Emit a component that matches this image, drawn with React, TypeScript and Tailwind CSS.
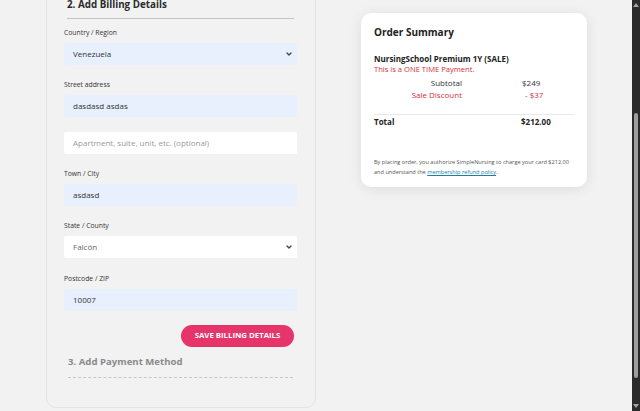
import { ChevronDown } from "lucide-react";

function Field({
  label,
  value,
  placeholder,
  filled,
  select,
  muted,
  className = "",
}: {
  label?: string;
  value?: string;
  placeholder?: string;
  filled?: boolean;
  select?: boolean;
  muted?: boolean;
  className?: string;
}) {
  return (
    <div className={className}>
      {label && <div className="h-[12px] text-[6.8px] leading-[12px] text-[#333]">{label}</div>}
      <div
        className={`${label ? "mt-[4px]" : ""} flex h-[22px] items-center justify-between rounded-[2px] px-[9px] text-[8px] ${
          filled ? "bg-[#e8f0fe]" : "bg-white"
        }`}
      >
        {value ? (
          <span className={muted ? "text-[#666]" : "text-[#333]"}>{value}</span>
        ) : (
          <span className="text-[#9a9a9a]">{placeholder}</span>
        )}
        {select && <ChevronDown size={8} strokeWidth={4} className="text-[#444] -mr-[5px]" />}
      </div>
    </div>
  );
}

export default function App() {
  return (
    <div className="flex h-[411px] w-[640px] overflow-hidden bg-[#f2f2f2] font-['Open_Sans',sans-serif]">
      <div className="flex flex-1 items-start">
        {/* billing form */}
        <div className="ml-[46px] mt-[-20px] w-[270px] rounded-b-[10px] border border-[#e3e3e3] bg-[#f2f2f2] pb-[29px] pl-[17px] pr-[18px] pt-[17px]">
          <div className="px-[3px]">
            <h2 className="text-[9.8px] font-bold leading-[13px] text-[#2b2b2b]">2. Add Billing Details</h2>
            <div className="mt-[7px] border-t border-[#c4c4c4]" />
          </div>

          <Field className="mt-[8px]" label="Country / Region" value="Venezuela" filled select />
          <Field className="mt-[14px]" label="Street address" value="dasdasd asdas" filled />
          <Field className="mt-[15px]" placeholder="Apartment, suite, unit, etc. (optional)" />
          <Field className="mt-[14px]" label="Town / City" value="asdasd" filled />
          <Field className="mt-[14px]" label="State / County" value="Falcón" select muted />
          <Field className="mt-[15px]" label="Postcode / ZIP" value="10007" filled />

          <div className="mt-[14px] flex justify-end pr-[3px]">
            <button className="h-[22px] w-[113px] rounded-full bg-[#e6356b] text-[7.8px] font-bold text-white">
              SAVE BILLING DETAILS
            </button>
          </div>

          <div className="mt-[8px] px-[4px]">
            <h3 className="text-[9.6px] font-bold leading-[14px] text-[#8a8a8a]">3. Add Payment Method</h3>
            <div className="mt-[8px] border-t border-dashed border-[#c8c8c8]" />
          </div>
        </div>

        {/* order summary */}
        <div className="ml-[45px] mt-[13px] h-[174px] w-[226px] rounded-[10px] bg-white px-[13px] pt-[11px] shadow-[0_2px_14px_rgba(0,0,0,0.09)]">
          <div className="text-[10px] font-bold leading-[16px] text-[#222]">Order Summary</div>
          <div className="mt-[13px] text-[8px] font-bold leading-[11px] text-[#222]">NursingSchool Premium 1Y (SALE)</div>
          <div className="text-[7.6px] leading-[11px] text-[#d12f3a]">This is a ONE TIME Payment.</div>
          <div className="mt-[2px] flex text-[8px] leading-[12px] text-[#333]">
            <span className="w-[88px] text-right">Subtotal</span>
            <span className="ml-[60px]">$249</span>
          </div>
          <div className="flex text-[8px] leading-[12px] text-[#d12f3a]">
            <span className="w-[88px] text-right">Sale Discount</span>
            <span className="ml-[63px]">- $37</span>
          </div>
          <div className="mt-[13px] border-t border-[#e8e8e8]" />
          <div className="mt-[1px] flex text-[8px] font-bold leading-[12px] text-[#222]">
            <span className="w-[147px]">Total</span>
            <span>$212.00</span>
          </div>
          <div className="mt-[29px] text-[5.6px] leading-[10px] text-[#555]">
            By placing order, you authorize SimpleNursing to charge your card $212.00
            <br />
            and understand the{" "}
            <a className="text-[#1a7fa3] underline">membership refund policy</a>.
          </div>
        </div>
      </div>

      {/* scrollbar */}
      <div className="flex w-[8px] flex-col items-center bg-[#2b2b2b] py-[3px]">
        <svg width="6" height="4" viewBox="0 0 6 4">
          <path d="M3 0 L6 4 L0 4 Z" fill="#a3a3a3" />
        </svg>
        <div className="mt-[106px] h-[265px] w-[4px] rounded-full bg-[#9e9e9e]" />
        <div className="flex-1" />
        <svg width="6" height="4" viewBox="0 0 6 4">
          <path d="M0 0 L6 0 L3 4 Z" fill="#a3a3a3" />
        </svg>
      </div>
    </div>
  );
}
